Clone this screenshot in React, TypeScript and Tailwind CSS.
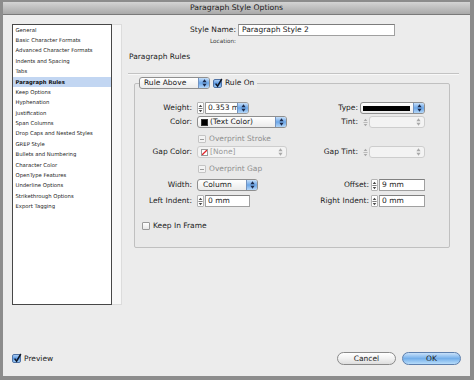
import React from "react";

const Arrows = ({ color = "#1c2a4a" }: { color?: string }) => (
  <svg width="5" height="8" viewBox="0 0 5 8">
    <path d="M2.5 0.3L4.6 3.2H0.4Z M2.5 7.7L0.4 4.8H4.6Z" fill={color} />
  </svg>
);

const StepGlyph = ({ color = "#555" }: { color?: string }) => (
  <svg width="5" height="9" viewBox="0 0 5 9">
    <path d="M2.5 0.8L4.3 3.1H0.7Z M2.5 8.2L0.7 5.9H4.3Z" fill={color} />
    <rect x="0.4" y="4.2" width="4.2" height="0.7" fill={color} />
  </svg>
);

const Stepper = ({ disabled = false }: { disabled?: boolean }) => (
  <div
    className={`flex h-[12px] w-[7px] shrink-0 items-center justify-center rounded-[1px] border ${
      disabled ? "border-[#d6d6d6] bg-[#f0f0f0]" : "border-[#b4b4b4] bg-white"
    }`}
  >
    <StepGlyph color={disabled ? "#b2b2b2" : "#4a4a4a"} />
  </div>
);

const BlueSeg = () => (
  <div className="flex h-full w-[11px] shrink-0 items-center justify-center border-l border-[#7393c0] bg-gradient-to-b from-[#c5def8] via-[#6ba6e8] to-[#b4d6f7]">
    <Arrows />
  </div>
);

const Popup = ({
  className = "",
  children,
  disabled = false,
}: {
  className?: string;
  children?: React.ReactNode;
  disabled?: boolean;
}) => (
  <div
    className={`flex h-[12px] shrink-0 overflow-hidden rounded-[3px] border ${
      disabled
        ? "border-[#cdcdcd] bg-[#f3f3f3]"
        : "border-[#8f8f8f] bg-gradient-to-b from-white to-[#ebebeb]"
    } ${className}`}
  >
    <div className="flex min-w-0 flex-1 items-center overflow-hidden whitespace-nowrap">{children}</div>
    {disabled ? (
      <div className="flex w-[11px] shrink-0 items-center justify-center">
        <Arrows color="#a9a9a9" />
      </div>
    ) : (
      <BlueSeg />
    )}
  </div>
);

const CheckOn = () => (
  <div className="relative h-[9px] w-[9px] shrink-0 rounded-[2px] border border-[#4f72a4] bg-gradient-to-b from-[#a8cdf5] via-[#5b98e2] to-[#9ccaf5]">
    <svg className="absolute -top-[2px] left-[0px]" width="9" height="10" viewBox="0 0 9 10">
      <path d="M1.6 5.6L3.6 8.2L7.8 1" stroke="#0e1626" strokeWidth="1.5" fill="none" />
    </svg>
  </div>
);

const CheckOff = () => (
  <div className="h-[8px] w-[8px] shrink-0 rounded-[1px] border border-[#9a9a9a] bg-gradient-to-b from-white to-[#e8e8e8]" />
);

const CheckDisabled = () => (
  <div className="flex h-[8px] w-[8px] shrink-0 items-center justify-center rounded-[1px] border border-[#c4c4c4] bg-[#f3f3f3]">
    <div className="h-px w-[4px] bg-[#9c9c9c]" />
  </div>
);

const listItems = [
  "General",
  "Basic Character Formats",
  "Advanced Character Formats",
  "Indents and Spacing",
  "Tabs",
  "Paragraph Rules",
  "Keep Options",
  "Hyphenation",
  "Justification",
  "Span Columns",
  "Drop Caps and Nested Styles",
  "GREP Style",
  "Bullets and Numbering",
  "Character Color",
  "OpenType Features",
  "Underline Options",
  "Strikethrough Options",
  "Export Tagging",
];

export default function App() {
  return (
    <div className="flex h-[380px] w-[474px] flex-col bg-[#8c8c8c] pb-[4px] pl-[3px] pr-[4px] pt-[2px] font-['Lucida_Grande','DejaVu_Sans',sans-serif] text-[7.5px] leading-none text-[#1b1b1b]">
      {/* Title bar */}
      <div className="flex h-[13px] shrink-0 items-center justify-center border-b border-[#7a7a7a] bg-gradient-to-b from-[#d4d4d4] to-[#a9a9a9] text-[7.7px] text-[#202020]">
        Paragraph Style Options
      </div>

      {/* Body */}
      <div className="flex flex-1 flex-col bg-[#ececec]">
        <div className="flex pl-[9px] pt-[9px]">
          {/* List */}
          <div className="flex h-[281px] w-[110px] shrink-0">
            <div className="h-full w-[100px] border border-[#474747] bg-white text-[5.3px] text-[#222]">
              {listItems.map((item) => (
                <div
                  key={item}
                  className={`flex h-[10.4px] items-center whitespace-nowrap pl-[2.5px] ${
                    item === "Paragraph Rules" ? "bg-[#c2d6f2] font-bold text-[#111]" : ""
                  }`}
                >
                  {item}
                </div>
              ))}
            </div>
            <div className="h-full w-[10px] border-y border-r border-[#dcdcdc] bg-[#f7f7f7]" />
          </div>

          {/* Right panel */}
          <div className="ml-[6px] flex w-[332px] flex-col">
            <div className="flex h-[12px] items-center">
              <div className="w-[108px] text-right">Style Name:</div>
              <div className="ml-[2px] flex h-[12px] w-[157px] items-center border border-[#a0a0a0] border-t-[#7c7c7c] bg-white pl-[3px]">
                Paragraph Style 2
              </div>
            </div>
            <div className="mt-[3px] flex h-[6px] items-center">
              <div className="w-[108px] text-right text-[5.7px] text-[#3a3a3a]">Location:</div>
            </div>
            <div className="mt-[7px] flex h-[10px] items-center pl-[1px]">Paragraph Rules</div>
            <div className="mt-[11px] h-px w-[331px] bg-[#c3c3c3]" />
            <div className="h-px w-[331px] bg-[#f8f8f8]" />

            {/* Group box */}
            <div className="ml-[6px] mt-[8px] flex h-[165px] w-[316px] flex-col rounded-[2px] border border-[#c0c0c0] bg-[#e9e9e9]">
              {/* Header */}
              <div className="-mt-[7px] ml-[4px] flex h-[12px] w-fit items-center bg-[#ececec] pr-[3px]">
                <Popup className="w-[71px]">
                  <span className="pl-[4px]">Rule Above</span>
                </Popup>
                <div className="ml-[3px]">
                  <CheckOn />
                </div>
                <span className="ml-[3px]">Rule On</span>
              </div>

              {/* Weight / Type */}
              <div className="mt-[13px] flex h-[12px] items-center">
                <div className="w-[57px] text-right">Weight:</div>
                <div className="ml-[5px] flex items-center">
                  <Stepper />
                  <div className="ml-[1px] flex h-[12px] w-[44px] overflow-hidden rounded-r-[3px] border border-[#9a9a9a]">
                    <div className="flex flex-1 items-center overflow-hidden whitespace-nowrap bg-white pl-[2px]">0.353 mm</div>
                    <BlueSeg />
                  </div>
                </div>
                <div className="flex flex-1 items-center justify-end pr-[24px]">
                  <span>Type:</span>
                  <Popup className="ml-[2px] w-[65px]">
                    <div className="ml-[2px] h-[5px] w-[47px] bg-black" />
                  </Popup>
                </div>
              </div>

              {/* Color / Tint */}
              <div className="mt-[2px] flex h-[12px] items-center">
                <div className="w-[57px] text-right">Color:</div>
                <Popup className="ml-[5px] w-[90px]">
                  <div className="ml-[3px] h-[7px] w-[7px] border border-[#333] bg-black" />
                  <span className="ml-[2px]">(Text Color)</span>
                </Popup>
                <div className="flex flex-1 items-center justify-end pr-[24px]">
                  <span>Tint:</span>
                  <div className="ml-[2px] flex w-[65px] items-center">
                    <div className="ml-[2px] flex h-[12px] w-[6px] items-center justify-center">
                      <StepGlyph color="#a8a8a8" />
                    </div>
                    <Popup disabled className="ml-[1px] w-[56px]" />
                  </div>
                </div>
              </div>

              {/* Overprint Stroke */}
              <div className="mt-[5px] flex h-[12px] items-center">
                <div className="w-[57px]" />
                <div className="ml-[6px] flex items-center text-[#8e8e8e]">
                  <CheckDisabled />
                  <span className="ml-[3px]">Overprint Stroke</span>
                </div>
              </div>

              {/* Gap Color / Gap Tint */}
              <div className="mt-[1px] flex h-[12px] items-center">
                <div className="w-[57px] text-right">Gap Color:</div>
                <Popup disabled className="ml-[5px] w-[90px]">
                  <div className="relative ml-[3px] h-[7px] w-[7px] overflow-hidden border border-[#9a9a9a] bg-white">
                    <svg className="absolute left-0 top-0" width="5" height="5" viewBox="0 0 5 5">
                      <path d="M0 5L5 0" stroke="#e0242a" strokeWidth="1.3" />
                    </svg>
                  </div>
                  <span className="ml-[2px] text-[#9a9a9a]">[None]</span>
                </Popup>
                <div className="flex flex-1 items-center justify-end pr-[24px]">
                  <span>Gap Tint:</span>
                  <div className="ml-[2px] flex w-[65px] items-center">
                    <div className="ml-[2px] flex h-[12px] w-[6px] items-center justify-center">
                      <StepGlyph color="#a8a8a8" />
                    </div>
                    <Popup disabled className="ml-[1px] w-[56px]" />
                  </div>
                </div>
              </div>

              {/* Overprint Gap */}
              <div className="mt-[5px] flex h-[12px] items-center">
                <div className="w-[57px]" />
                <div className="ml-[6px] flex items-center text-[#8e8e8e]">
                  <CheckDisabled />
                  <span className="ml-[3px]">Overprint Gap</span>
                </div>
              </div>

              {/* Width / Offset */}
              <div className="mt-[4px] flex h-[12px] items-center">
                <div className="w-[57px] text-right">Width:</div>
                <Popup className="ml-[5px] w-[61px]">
                  <span className="pl-[5px]">Column</span>
                </Popup>
                <div className="flex flex-1 items-center justify-end pr-[24px]">
                  <span>Offset:</span>
                  <div className="ml-[2px] flex w-[54px] items-center">
                    <Stepper />
                    <div className="ml-[1px] flex h-[12px] flex-1 items-center border border-[#a0a0a0] border-t-[#808080] bg-white pl-[2px]">
                      9 mm
                    </div>
                  </div>
                </div>
              </div>

              {/* Left Indent / Right Indent */}
              <div className="mt-[4px] flex h-[12px] items-center">
                <div className="w-[57px] text-right">Left Indent:</div>
                <div className="ml-[5px] flex w-[53px] items-center">
                  <Stepper />
                  <div className="ml-[1px] flex h-[12px] flex-1 items-center border border-[#a0a0a0] border-t-[#808080] bg-white pl-[2px]">
                    0 mm
                  </div>
                </div>
                <div className="flex flex-1 items-center justify-end pr-[24px]">
                  <span>Right Indent:</span>
                  <div className="ml-[2px] flex w-[54px] items-center">
                    <Stepper />
                    <div className="ml-[1px] flex h-[12px] flex-1 items-center border border-[#a0a0a0] border-t-[#808080] bg-white pl-[2px]">
                      0 mm
                    </div>
                  </div>
                </div>
              </div>

              {/* Keep In Frame */}
              <div className="ml-[7px] mt-[13px] flex h-[12px] items-center">
                <CheckOff />
                <span className="ml-[3px]">Keep In Frame</span>
              </div>
            </div>
          </div>
        </div>

        {/* Bottom bar */}
        <div className="mb-[11px] mt-auto flex h-[13px] items-center pl-[9px] pr-[9px]">
          <CheckOn />
          <span className="ml-[3px]">Preview</span>
          <div className="ml-auto flex items-center gap-[6px]">
            <div className="flex h-[13px] w-[59px] items-center justify-center rounded-full border border-[#8a8a8a] bg-gradient-to-b from-white via-[#f1f1f1] to-[#dedede]">
              Cancel
            </div>
            <div className="flex h-[13px] w-[59px] items-center justify-center rounded-full border border-[#5d7fad] bg-gradient-to-b from-[#c8e1fa] via-[#74afea] to-[#b7dcfa]">
              OK
            </div>
          </div>
        </div>
      </div>
    </div>
  );
}
